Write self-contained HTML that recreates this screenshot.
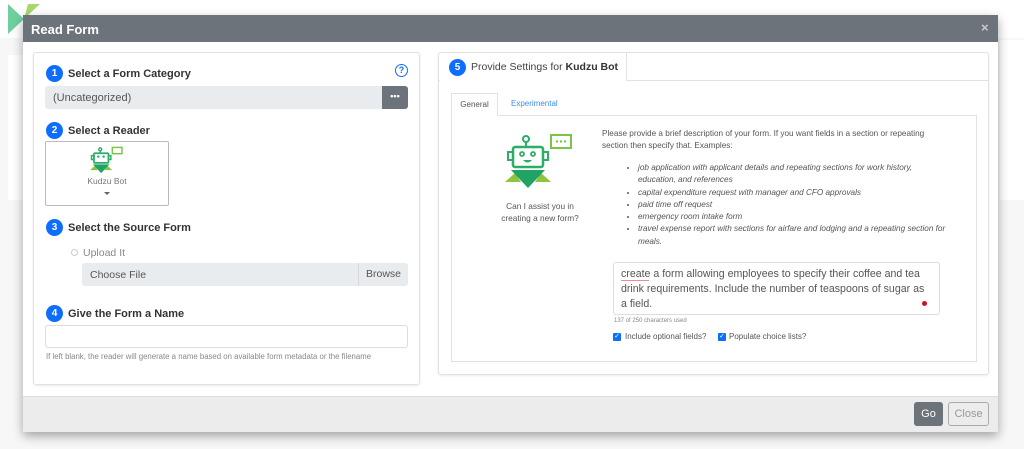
<!DOCTYPE html>
<html><head><style>
*{box-sizing:border-box;margin:0;padding:0}
body{width:1024px;height:449px;overflow:hidden;background:#f7f7f7;font-family:"Liberation Sans",sans-serif;position:relative;color:#333}
.abs{position:absolute}
.num{position:absolute;width:17px;height:17px;border-radius:50%;background:#0d6efd;color:#fff;font-size:10px;font-weight:bold;text-align:center;line-height:17px}
.lbl{position:absolute;font-size:11px;font-weight:bold;color:#333}
.cb{position:absolute;width:8px;height:8px;background:#0d6efd;border-radius:1px;color:#fff;font-size:7px;line-height:8px;text-align:center}
</style></head><body>
<div class="abs" style="left:0;top:0;width:1024px;height:38px;background:#fff"></div>
<svg class="abs" style="left:6px;top:2px" width="34" height="34"><polygon points="2,2 2,32 18,17" fill="#6fcf9f"/><polygon points="18,17 34,2 22,2" fill="#a8d86c"/></svg>
<div class="abs" style="left:8px;top:55px;width:20px;height:145px;background:#fff"></div>
<div class="abs" style="left:1000px;top:40px;width:24px;height:160px;background:#fff"></div>
<div class="abs" style="left:23px;top:15px;width:975px;height:417px;background:#fff;box-shadow:0 4px 10px rgba(0,0,0,.35)">
<div class="abs" style="left:0;top:0;width:975px;height:27px;background:#6c737b"></div>
<div class="abs" style="left:8px;top:7px;color:#fff;font-weight:bold;font-size:13px">Read Form</div>
<div class="abs" style="left:958px;top:5px;color:#c8ccd0;font-weight:bold;font-size:13px">×</div>
<div class="abs" style="left:0;top:381px;width:975px;height:36px;background:#ececec;border-top:1px solid #ddd"></div>
<div class="abs" style="left:891px;top:387px;width:29px;height:24px;background:#6c737b;border-radius:3px;color:#fff;font-size:11px;text-align:center;line-height:24px">Go</div>
<div class="abs" style="left:925px;top:387px;width:41px;height:24px;border:1px solid #aaa;border-radius:3px;color:#999;font-size:11px;text-align:center;line-height:22px">Close</div>
</div>
<div class="abs" style="left:33px;top:52px;width:387px;height:333px;border:1px solid #e2e2e2;border-radius:3px;box-shadow:0 1px 2px rgba(0,0,0,.08)"></div>
<div class="num" style="left:46px;top:65px">1</div><div class="lbl" style="left:68px;top:68px">Select a Form Category</div>
<div class="abs" style="left:395px;top:64px;width:13px;height:13px;border:1.5px solid #0d6efd;border-radius:50%;color:#0d6efd;font-size:9px;font-weight:bold;text-align:center;line-height:10px">?</div>
<div class="abs" style="left:45px;top:86px;width:337px;height:23px;background:#e9ecef;border-radius:3px 0 0 3px;font-size:11px;color:#555;padding:6px 8px">(Uncategorized)</div>
<div class="abs" style="left:382px;top:86px;width:26px;height:23px;background:#6c737b;border-radius:0 3px 3px 0;color:#fff;font-size:9px;text-align:center;line-height:21px;font-weight:bold">•••</div>
<div class="num" style="left:46px;top:122px">2</div><div class="lbl" style="left:68px;top:125px">Select a Reader</div>
<div class="abs" style="left:45px;top:141px;width:124px;height:65px;border:1px solid #bbb;border-radius:2px"></div>
<svg class="abs" style="left:90px;top:145px" width="34" height="30" viewBox="0 0 70 62"><rect x="46" y="5" width="20" height="13" fill="none" stroke="#7cc34a" stroke-width="3"/><circle cx="21" cy="9" r="3" fill="none" stroke="#2bae66" stroke-width="3"/><line x1="21" y1="12" x2="21" y2="17" stroke="#2bae66" stroke-width="3"/><rect x="8" y="17" width="30" height="20" rx="2" fill="none" stroke="#2bae66" stroke-width="3.5"/><rect x="3" y="22" width="5" height="8" fill="none" stroke="#2bae66" stroke-width="3"/><rect x="38" y="22" width="5" height="8" fill="none" stroke="#2bae66" stroke-width="3"/><circle cx="17" cy="24" r="2.5" fill="#2bae66"/><circle cx="28" cy="24" r="2.5" fill="#2bae66"/><polygon points="0,52 10,43 16,52" fill="#8cc63f"/><polygon points="30,52 36,43 46,52" fill="#8cc63f"/><polygon points="6,40 40,40 23,58" fill="#21a366"/></svg>
<div class="abs" style="left:45px;top:176px;width:124px;text-align:center;font-size:8.5px;color:#777">Kudzu Bot</div>
<div class="abs" style="left:104px;top:192px;border-left:3px solid transparent;border-right:3px solid transparent;border-top:3px solid #666"></div>
<div class="num" style="left:46px;top:219px">3</div><div class="lbl" style="left:68px;top:222px">Select the Source Form</div>
<div class="abs" style="left:71px;top:249px;width:7px;height:7px;border:1px solid #ccc;border-radius:50%"></div>
<div class="abs" style="left:83px;top:247px;font-size:10.5px;color:#888">Upload It</div>
<div class="abs" style="left:82px;top:263px;width:326px;height:23px;background:#e9ecef;border-radius:3px;font-size:10.5px;color:#555;padding:6px 8px">Choose File</div>
<div class="abs" style="left:358px;top:263px;width:50px;height:23px;border-left:1px solid #d8d8d8;font-size:10.5px;color:#555;text-align:center;line-height:23px">Browse</div>
<div class="num" style="left:46px;top:305px">4</div><div class="lbl" style="left:68px;top:308px">Give the Form a Name</div>
<div class="abs" style="left:45px;top:325px;width:363px;height:23px;border:1px solid #ddd;border-radius:3px"></div>
<div class="abs" style="left:46px;top:352px;font-size:7.8px;color:#888">If left blank, the reader will generate a name based on available form metadata or the filename</div>
<div class="abs" style="left:438px;top:52px;width:551px;height:323px;border:1px solid #e2e2e2;border-radius:3px;box-shadow:0 1px 2px rgba(0,0,0,.08)"></div>
<div class="abs" style="left:438px;top:80px;width:551px;border-top:1px solid #e2e2e2"></div>
<div class="abs" style="left:440px;top:53px;width:187px;height:28px;background:#fff;border-right:1px solid #e2e2e2"></div>
<div class="num" style="left:449px;top:59px">5</div>
<div class="abs" style="left:471px;top:61px;font-size:10.5px;color:#444">Provide Settings for <b style="color:#333">Kudzu Bot</b></div>
<div class="abs" style="left:451px;top:115px;width:526px;height:247px;border:1px solid #e2e2e2"></div>
<div class="abs" style="left:451px;top:93px;width:47px;height:23px;border:1px solid #e2e2e2;border-bottom:1px solid #fff;background:#fff;font-size:8px;color:#555;text-align:center;line-height:21px">General</div>
<div class="abs" style="left:511px;top:99px;font-size:8px;color:#3b8fe6">Experimental</div>
<svg class="abs" style="left:505px;top:130px" width="70" height="62" viewBox="0 0 70 62"><rect x="46" y="5" width="20" height="13" fill="none" stroke="#7cc34a" stroke-width="2"/><circle cx="52" cy="11.5" r="1.2" fill="#7cc34a"/><circle cx="56" cy="11.5" r="1.2" fill="#7cc34a"/><circle cx="60" cy="11.5" r="1.2" fill="#7cc34a"/><circle cx="21" cy="9" r="3" fill="none" stroke="#2bae66" stroke-width="2"/><line x1="21" y1="12" x2="21" y2="17" stroke="#2bae66" stroke-width="2"/><rect x="8" y="17" width="30" height="20" rx="2" fill="none" stroke="#2bae66" stroke-width="2.5"/><rect x="3" y="22" width="5" height="8" fill="none" stroke="#2bae66" stroke-width="2"/><rect x="38" y="22" width="5" height="8" fill="none" stroke="#2bae66" stroke-width="2"/><circle cx="17" cy="24" r="2" fill="none" stroke="#2bae66" stroke-width="1.8"/><circle cx="28" cy="24" r="2" fill="none" stroke="#2bae66" stroke-width="1.8"/><path d="M18 30 Q22.5 35 27 30Z" fill="#2bae66"/><polygon points="0,52 10,43 16,52" fill="#8cc63f"/><polygon points="30,52 36,43 46,52" fill="#8cc63f"/><polygon points="6,40 40,40 23,58" fill="#21a366"/></svg>
<div class="abs" style="left:490px;top:200px;width:100px;text-align:center;font-size:8.3px;color:#555;line-height:12px">Can I assist you in<br>creating a new form?</div>
<div class="abs" style="left:602px;top:128px;width:325px;font-size:8.2px;color:#555;line-height:12px">Please provide a brief description of your form. If you want fields in a section or repeating section then specify that. Examples:</div>
<ul class="abs" style="left:626px;top:162px;width:322px;font-size:8.2px;color:#555;line-height:12.3px;font-style:italic;padding-left:12px">
<li>job application with applicant details and repeating sections for work history, education, and references</li>
<li>capital expenditure request with manager and CFO approvals</li>
<li>paid time off request</li>
<li>emergency room intake form</li>
<li>travel expense report with sections for airfare and lodging and a repeating section for meals.</li></ul>
<div class="abs" style="left:613px;top:262px;width:327px;height:53px;border:1px solid #ddd;border-radius:3px;padding:4px 7px 4px 7px;font-size:10.6px;color:#555;line-height:15px">create a form allowing employees to specify their coffee and tea drink requirements. Include the number of teaspoons of sugar as a field.</div>
<div class="abs" style="left:621px;top:280px;width:28px;border-top:1.5px solid #f08a9a"></div>
<div class="abs" style="left:922px;top:301px;width:5px;height:5px;border-radius:50%;background:#d0102a"></div>
<div class="abs" style="left:614px;top:318px;font-size:6px;color:#888">137 of 250 characters used</div>
<div class="cb" style="left:613px;top:333px">✓</div>
<div class="abs" style="left:625px;top:332px;font-size:8px;color:#555">Include optional fields?</div>
<div class="cb" style="left:718px;top:333px">✓</div>
<div class="abs" style="left:729px;top:332px;font-size:8px;color:#555">Populate choice lists?</div>
</body></html>
